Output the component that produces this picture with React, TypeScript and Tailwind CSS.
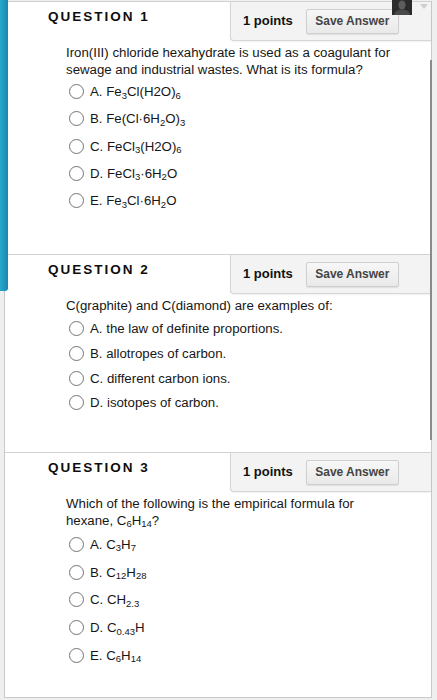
import type { ReactNode } from "react";

type Question = {
  num: number;
  text: ReactNode;
  options: ReactNode[];
  height: string;
  listTop: string;
  rowH: string;
};

const S = ({ children }: { children: ReactNode }) => (
  <sub className="text-[9.5px] leading-[10px]">{children}</sub>
);

const questions: Question[] = [
  {
    num: 1,
    text: "Iron(III) chloride hexahydrate is used as a coagulant for sewage and industrial wastes. What is its formula?",
    options: [
      <>A. Fe<S>3</S>Cl(H2O)<S>6</S></>,
      <>B. Fe(Cl·6H<S>2</S>O)<S>3</S></>,
      <>C. FeCl<S>3</S>(H2O)<S>6</S></>,
      <>D. FeCl<S>3</S>·6H<S>2</S>O</>,
      <>E. Fe<S>3</S>Cl·6H<S>2</S>O</>,
    ],
    height: "h-[253px]",
    listTop: "mt-[0px]",
    rowH: "h-[27.25px]",
  },
  {
    num: 2,
    text: "C(graphite) and C(diamond) are examples of:",
    options: [
      "A. the law of definite proportions.",
      "B. allotropes of carbon.",
      "C. different carbon ions.",
      "D. isotopes of carbon.",
    ],
    height: "h-[198px]",
    listTop: "mt-[2.5px]",
    rowH: "h-[24.67px]",
  },
  {
    num: 3,
    text: (
      <>
        <span className="block">Which of the following is the empirical formula for</span>
        <span>hexane, C</span>
        <S>6</S>
        <span>H</span>
        <S>14</S>
        <span>?</span>
      </>
    ),
    options: [
      <>A. C<S>3</S>H<S>7</S></>,
      <>B. C<S>12</S>H<S>28</S></>,
      <>C. CH<S>2.3</S></>,
      <>D. C<S>0.43</S>H</>,
      <>E. C<S>6</S>H<S>14</S></>,
    ],
    height: "h-[245px]",
    listTop: "mt-[1.5px]",
    rowH: "h-[27.75px]",
  },
];

const Radio = () => (
  <span className="w-[15px] h-[15px] rounded-full border-[1.5px] border-[#747474] bg-white shrink-0" />
);

const QuestionCard = ({ q }: { q: Question }) => (
  <div className={`border-t border-[#d2d2d2] ${q.height}`}>
    <div className="flex justify-between h-[39px]">
      <div className="pl-[43px] pt-[7px] text-[13.5px] leading-[15px] font-bold tracking-[2px] text-[#0d0d0d]">
        QUESTION {q.num}
      </div>
      <div className="w-[201px] h-[39px] bg-[#f3f3f3] border-l border-b border-[#d6d6d6] rounded-bl-[4px] shadow-[0_1px_2px_rgba(0,0,0,0.06)] flex items-center pl-[12px]">
        <span className="text-[13px] font-bold text-[#111]">1 points</span>
        <button className="ml-[13px] w-[93px] h-[25px] rounded-[2px] border border-[#cfcfcf] bg-gradient-to-b from-[#f7f7f7] to-[#e9e9e9] text-[12px] font-bold text-[#444] shadow-[0_1px_1px_rgba(0,0,0,0.08)]">
          Save Answer
        </button>
      </div>
    </div>
    <p className="ml-[61px] mt-[3px] w-[338px] text-[13.25px] leading-[17px] text-[#161616]">
      {q.text}
    </p>
    <div className={`ml-[64px] ${q.listTop}`}>
      {q.options.map((o, i) => (
        <div key={i} className={`flex items-center gap-[6px] ${q.rowH} text-[13.25px] text-[#161616]`}>
          <Radio />
          <span className="leading-[17px]">{o}</span>
        </div>
      ))}
    </div>
  </div>
);

export default function App() {
  return (
    <div
      className="relative w-[437px] h-[700px] overflow-hidden bg-[#efefef] pt-[1px]"
      style={{ fontFamily: '"Liberation Sans", Arial, sans-serif' }}
    >
      <div className="ml-[4px] w-[428px] bg-white border-l border-r border-b border-[#c9c9c9]">
        {questions.map((q) => (
          <QuestionCard key={q.num} q={q} />
        ))}
      </div>

      {/* blue left accent */}
      <div className="absolute left-0 top-0 w-[8px] h-[291px] rounded-br-[3px] bg-gradient-to-r from-[#2aa9cc] to-[#1687ad]" />

      {/* scrollbar thumb */}
      <div className="absolute left-[430px] top-[60px] w-[2px] h-[380px] bg-[#8a8a8a]" />

      {/* avatar */}
      <div className="absolute left-[392px] top-0 w-[20px] h-[15px] bg-[#2b2b2b] overflow-hidden">
        <svg width="20" height="15" viewBox="0 0 20 15">
          <ellipse cx="10" cy="5" rx="3.6" ry="4.6" fill="#5c5c5c" />
          <path d="M2 15 C3 10 7 9.5 10 9.5 C13 9.5 17 10 18 15 Z" fill="#4a4a4a" />
        </svg>
      </div>
      <svg className="absolute left-[420px] top-[4px]" width="8" height="5" viewBox="0 0 8 5">
        <path d="M0 0 L8 0 L4 5 Z" fill="#cfcfcf" />
      </svg>
    </div>
  );
}
